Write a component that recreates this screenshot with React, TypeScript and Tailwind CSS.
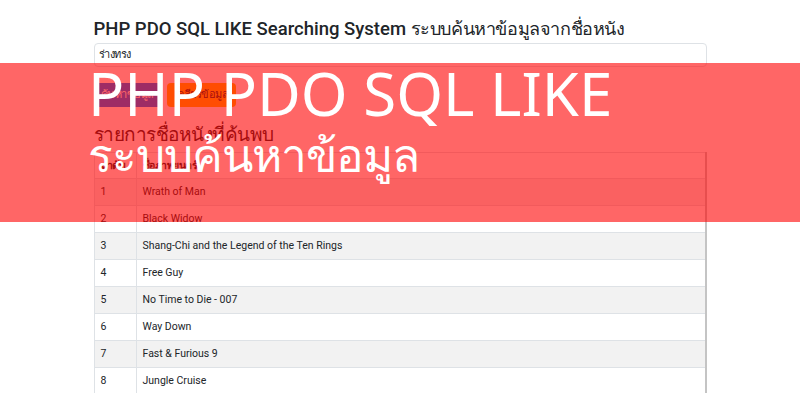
import React from 'react';

const movies = [
  'Wrath of Man',
  'Black Widow',
  'Shang-Chi and the Legend of the Ten Rings',
  'Free Guy',
  'No Time to Die - 007',
  'Way Down',
  'Fast & Furious 9',
  'Jungle Cruise',
];

export default function App() {
  return (
    <div className="relative h-[393px] w-[800px] overflow-hidden bg-white font-['Roboto','Noto_Sans',sans-serif] text-[#212529]">
      <main className="mx-auto w-[613px] pt-[16px]">
        <h1 className="text-[18.5px] leading-[26px] font-medium">
          PHP PDO SQL LIKE Searching System{' '}
          <span className="text-[18px] tracking-[-0.4px]">ระบบค้นหาข้อมูลจากชื่อหนัง</span>
        </h1>
        <div className="mt-[1px] flex h-[24px] items-center rounded border border-[#dee2e6] px-[4px] text-[11px] tracking-[-0.5px]">
          ร่างทรง
        </div>
        <div className="mt-[16px] flex gap-[6px]">
          <button className="h-[24px] w-[67px] rounded bg-[#0d6efd] text-[11px] tracking-[-0.5px] text-white">ค้นหาข้อมูล</button>
          <button className="h-[24px] w-[69px] rounded bg-[#ffc107] text-[11px] tracking-[-0.5px] text-[#212529]">เคลียร์ข้อมูล</button>
        </div>
        <h2 className="mt-[14px] text-[19px] leading-[28px] tracking-[-0.5px]">รายการชื่อหนังที่ค้นพบ</h2>
        <table className="mt-[3px] w-full border-collapse border-l border-r-2 border-[#dee2e6] border-r-[#c4c4c4] text-[10.5px]">
          <thead>
            <tr className="h-[26px] border-t border-b border-[#dee2e6]">
              <th className="w-[42px] border-r border-[#dee2e6] px-[6px] text-left font-semibold tracking-[-0.5px]">ลำดับ</th>
              <th className="px-[6px] text-left font-semibold tracking-[-0.5px]">ชื่อภาพยนตร์</th>
            </tr>
          </thead>
          <tbody>
            {movies.map((m, i) => (
              <tr key={m} className={`h-[27px] border-b border-[#dee2e6] ${i % 2 === 0 ? 'bg-[#f2f2f2]' : 'bg-white'}`}>
                <td className="border-r border-[#dee2e6] px-[6px]">{i + 1}</td>
                <td className="px-[6px]">{m}</td>
              </tr>
            ))}
          </tbody>
        </table>
      </main>
      <div className="absolute left-0 top-[63px] h-[159px] w-full bg-[rgba(255,0,0,0.6)] pl-[88px] font-['Noto_Sans',sans-serif] text-white">
        <div className="text-[60px] leading-[60px]">PHP PDO SQL LIKE</div>
        <div className="mt-[3px] text-[46px] leading-[56px] tracking-[-1px]">ระบบค้นหาข้อมูล</div>
      </div>
    </div>
  );
}
